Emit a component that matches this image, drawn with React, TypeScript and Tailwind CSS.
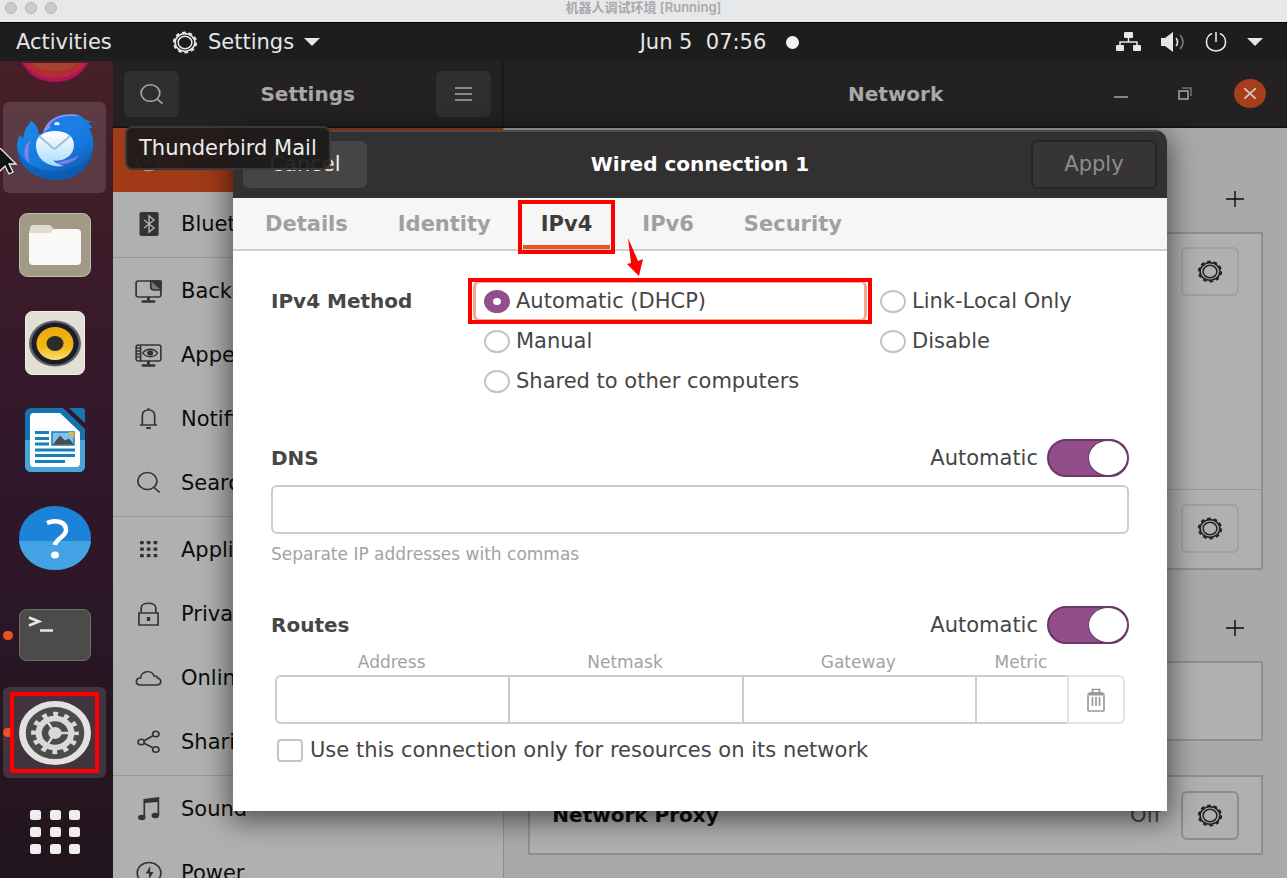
import type { ReactNode } from "react";

const GearIcon = () => (
    <svg viewBox="0 0 26 23" className="h-[23px] w-[26px]" fill="none" stroke="currentColor">
        <ellipse cx="13" cy="11.500" rx="11.200" ry="10" strokeWidth="1.900" strokeDasharray="3.700 2.970" />
        <ellipse cx="13" cy="11.500" rx="9.900" ry="8.800" strokeWidth="1.700" />
        <ellipse cx="13" cy="11.500" rx="6.900" ry="6.200" strokeWidth="1.500" />
    </svg>
);

const SearchIcon = () => (
    <svg viewBox="0 0 24 24" preserveAspectRatio="none" className="h-[22px] w-[25px]" fill="none" stroke="currentColor" strokeWidth="1.600">
        <circle cx="11" cy="11" r="9" />
        <path d="M17.500 17.500L22.500 22.500" />
    </svg>
);

const PlusIcon = () => (
    <svg viewBox="0 0 18 18" className="size-[18px]" stroke="currentColor" strokeWidth="1.400">
        <path d="M9 1v16M0 9h18" />
    </svg>
);

const Arrow = () => (
    <svg viewBox="0 0 16 8" className="h-2 w-4" fill="currentColor">
        <path d="M0 0h16L8 8z" />
    </svg>
);

/* ---------- dock ---------- */

const ThunderbirdIcon = () => (
    <svg viewBox="0 0 78 67" className="h-[67px] w-[78px]">
        <defs>
            <linearGradient id="tb" x1="0" y1="0" x2=".6" y2="1">
                <stop offset="0" stopColor="#1d8cec" />
                <stop offset=".7" stopColor="#1678de" />
                <stop offset="1" stopColor="#0f5cb4" />
            </linearGradient>
            <linearGradient id="env" x1="0" y1="0" x2="0" y2="1">
                <stop offset="0" stopColor="#fff" />
                <stop offset="1" stopColor="#a9dbfb" />
            </linearGradient>
        </defs>
        <path d="M27 19C30 7 40 0 54 0c8 0 12 2 14 5l8 3-4 1 5 5h-4c4 7 5 14 4 21-2 19-18 32-38 31C16 65 0 50 1 32c0-4 1-8 3-11l3 4c1-8 4-14 8.500-18C21 11 22 15 23 20z" fill="url(#tb)" />
        <path d="M1 32c3 15 16 24 36 25 19 1 34-8 40-22-2 19-18 32-38 31C16 65 0 50 1 32z" fill="#0e58ac" opacity=".7" />
        <path d="M27 19C30 7 40 .5 54 .5c4 0 8 0 10 2-12-1-22 2-28 9-2 3-5 4-9 7.500z" fill="#9b8bf0" />
        <path d="M33 12C38 4 46 2 56 2c8 0 13 4 16 9L50 30z" fill="#1a7fe4" />
        <path d="M15 26c-8 5-9 17-2 23-1-11-1-18 2-23z" fill="#8583ea" />
        <path d="M37 50c9 2 22-1 26-9-4 3-12 5-17 6z" fill="#7f79e8" />
        <path d="M20 31c0-9 8-14 19-14s19 5 19 14c0 7-5 13-12 15-4 1-8 1-9 0 2 3 6 5 11 6-15 2-28-6-28-21z" fill="url(#env)" />
        <path d="M23 22l14 12c1 1 2 1 3 0l14-12" fill="none" stroke="#9dbcd4" strokeWidth="1.800" />
        <ellipse cx="41" cy="9.700" rx="2.800" ry="1.600" fill="#e8f4ff" />
    </svg>
);

const FilesIcon = () => (
    <svg viewBox="0 0 72 64" className="h-16 w-[72px]">
        <rect x=".5" y=".5" width="71" height="63" rx="8" fill="#a09a86" stroke="#c1bcab" />
        <path d="M11 16c0-3 1-4 4-4h15c3 0 3 4 6 4v8H11z" fill="#dfdbcd" />
        <rect x="10" y="16" width="52" height="36" rx="4" fill="#faf9f8" />
        <path d="M10 20h20c3 0 3-4 6-4H14c-3 0-4 2-4 4z" fill="#dfdbcd" />
    </svg>
);

const RhythmboxIcon = () => (
    <svg viewBox="0 0 60 64" className="h-16 w-[60px]">
        <defs>
            <linearGradient id="cone" x1="0" y1="0" x2="0" y2="1">
                <stop offset="0" stopColor="#e9a90c" />
                <stop offset=".6" stopColor="#efb915" />
                <stop offset="1" stopColor="#fbe172" />
            </linearGradient>
        </defs>
        <rect x=".5" y=".5" width="59" height="63" rx="7" fill="#e3dfd4" stroke="#f2efe8" />
        <ellipse cx="30" cy="32.500" rx="26" ry="23" fill="#5f6266" />
        <ellipse cx="30" cy="32.500" rx="23.500" ry="21" fill="#1c1d28" />
        <ellipse cx="30" cy="32.500" rx="18.500" ry="16.500" fill="url(#cone)" />
        <ellipse cx="30" cy="32.500" rx="8.500" ry="7.500" fill="#2b2b2b" />
    </svg>
);

const WriterIcon = () => (
    <svg viewBox="0 0 60 64" className="h-16 w-[60px]">
        <path d="M7 0h31l22 21v37c0 4-3 6-6 6H7c-4 0-7-2-7-6V6c0-4 3-6 7-6z" fill="#1273ae" />
        <path d="M0 32h60v26c0 4-3 6-6 6H7c-4 0-7-2-7-6z" fill="#48a5d9" />
        <path d="M44 0h13c2 0 3 1 3 3v12z" fill="#1677b2" />
        <path d="M9 5h26l20 19v31c0 3-2 4-4 4H9c-3 0-4-1-4-4V9c0-3 1-4 4-4z" fill="#fdfdfd" />
        <path d="M10 24.500h14M10 30.500h14M10 36h14M10 42h40M10 47.500h40M10 53.500h30" stroke="#1b7fbd" strokeWidth="2.800" />
        <rect x="27" y="24" width="22" height="13" fill="#7cc3ee" stroke="#1b7fbd" strokeWidth="1.500" />
        <path d="M43 24h6v6z" fill="#e9b91c" />
        <path d="M28 36.500l7-9 5 5 4-2 5 6z" fill="#4c4c4c" />
    </svg>
);

const HelpIcon = () => (
    <svg viewBox="0 0 72 64" className="h-16 w-[72px]">
        <ellipse cx="36" cy="32" rx="36" ry="32" fill="#1c83d8" />
        <path d="M0 35h72C70 52 55 64 36 64S2 52 0 35z" fill="#43a3e4" />
        <path d="M28 17c9-4 19-1 19 7 0 7-10 8-11 15" fill="none" stroke="#fff" strokeWidth="4.500" />
        <ellipse cx="36" cy="49" rx="4" ry="3.600" fill="#fff" />
    </svg>
);

const TerminalIcon = () => (
    <svg viewBox="0 0 72 52" className="h-[52px] w-[72px]">
        <rect x=".5" y=".5" width="71" height="51" rx="7" fill="#4b4b4a" stroke="#6f6d6c" />
        <path d="M10 8.500l10 4-10 4M21 21.500h13" fill="none" stroke="#e8e8e8" strokeWidth="2.600" />
    </svg>
);

const SettingsIcon = () => (
    <svg viewBox="0 0 64 64" preserveAspectRatio="none" className="h-16 w-[72px]" fill="none">
        <circle cx="32" cy="32" r="29" fill="#4b4b4a" stroke="#e2e2e2" strokeWidth="6" />
        <circle cx="32" cy="32" r="19" stroke="#d9d9d9" strokeWidth="4.400" strokeDasharray="4.400 5.550" strokeDashoffset="2.200" />
        <circle cx="32" cy="32" r="14.500" stroke="#d9d9d9" strokeWidth="5.500" />
        <circle cx="32" cy="32" r="6" fill="#d9d9d9" />
        <path d="M32 32h13M32 32l-7-12M32 32l-7 12" stroke="#d9d9d9" strokeWidth="2.400" />
    </svg>
);

const AppsIcon = () => (
    <svg viewBox="0 0 50 44" className="h-11 w-[50px]" fill="#efeeec">
        {[0, 20, 39].map((x) => [0, 17, 34].map((y) => <rect key={`${x}-${y}`} x={x} y={y} width="11" height="10" rx="2.500" />))}
    </svg>
);

interface DockItem {
    label: string;
    icon: ReactNode;
    active?: boolean;
    running?: boolean;
    marked?: boolean;
}

const dockItems: DockItem[] = [
    { label: "Thunderbird Mail", icon: <ThunderbirdIcon />, active: true },
    { label: "Files", icon: <FilesIcon /> },
    { label: "Rhythmbox", icon: <RhythmboxIcon /> },
    { label: "LibreOffice Writer", icon: <WriterIcon /> },
    { label: "Help", icon: <HelpIcon /> },
    { label: "Terminal", icon: <TerminalIcon />, running: true },
    { label: "Settings", icon: <SettingsIcon />, active: true, running: true, marked: true },
];

const Dock = () => (
    <nav className="relative flex w-[113px] shrink-0 flex-col items-center overflow-hidden bg-linear-to-b from-[#471f27] via-[#30172b] via-50% to-[#22151d] pr-1">
        <div className="flex h-[41px] shrink-0 items-start">
            {/* bottom edge of the Firefox icon, scrolled out of the dock */}
            <svg viewBox="0 0 66 22" className="h-[22px] w-[66px]">
                <path d="M0 2h66C59 15 47 21 33 21S7 15 0 2z" fill="#b3125a" />
                <path d="M2 2h62C56 12 46 17 33 17S10 12 2 2z" fill="#b22c33" />
                <path d="M10 2h46c-6 6-14 8-23 8S16 8 10 2z" fill="#a7432f" />
            </svg>
        </div>
        <div className="flex h-[676px] shrink-0 flex-col justify-between">
            {dockItems.map((item) => (
                <button
                    key={item.label}
                    aria-label={item.label}
                    className={`relative flex h-[91px] w-[103px] items-center justify-center rounded-md ${item.active ? "bg-white/13" : ""}`}
                >
                    {item.running && <span className="absolute left-0 h-[9px] w-[10px] rounded-full bg-[#e95420]" />}
                    {item.icon}
                    {item.marked && <span className="absolute inset-x-[7px] inset-y-[5px] border-4 border-[#fe0000]" />}
                </button>
            ))}
        </div>
        <button aria-label="Show Applications" className="mt-8 shrink-0">
            <AppsIcon />
        </button>
        <svg viewBox="0 0 18 30" className="absolute top-[87px] left-0 h-[30px] w-[18px]" fill="#111" stroke="#eee" strokeWidth="1.300">
            <path d="M-8 -8L16 16h-7l4 8-4 2-4-8-6 6z" />
        </svg>
    </nav>
);

/* ---------- sidebar ---------- */

const rowIcons: Record<string, ReactNode> = {
    Network: (
        <g fill="none" stroke="currentColor" strokeWidth="1.500">
            <circle cx="12" cy="12" r="10.500" />
            <path d="M12 7v8M9 12l3 3 3-3" />
        </g>
    ),
    Bluetooth: (
        <g>
            <rect x="4" y="0" width="17" height="24" rx="2" fill="currentColor" />
            <path d="M8 8l9 8-4.500 4V4L17 8l-9 8" fill="none" stroke="#b0b0b0" strokeWidth="1.300" />
        </g>
    ),
    Background: (
        <g fill="none" stroke="currentColor" strokeWidth="1.500">
            <rect x="1" y="2" width="22" height="16" rx="2" />
            <path d="M14 2v6c0 2 1 3 3 3h6V2z" fill="#777" />
            <path d="M14 2l9 9V2z" fill="currentColor" stroke="none" />
            <path d="M12 18v4M6 22.500h12" strokeWidth="2.500" />
        </g>
    ),
    Appearance: (
        <g fill="none" stroke="currentColor" strokeWidth="1.400">
            <rect x="1" y="2" width="22" height="16" rx="2" />
            <path d="M5 2v16M1 5h4M1 8h4M1 11h4M1 14h4M7 10c3-5 10-5 13 0-3 5-10 5-13 0z" />
            <circle cx="13.500" cy="10" r="2" fill="currentColor" />
            <path d="M12 18v4M6 22.500h12" strokeWidth="2.500" />
        </g>
    ),
    Notifications: (
        <g fill="none" stroke="currentColor" strokeWidth="1.500">
            <path d="M4.500 18h15M6.500 18V9c0-4 2-6 5.500-6s5.500 2 5.500 6v9M12 1v2" />
            <path d="M10 21h4" strokeWidth="2" />
        </g>
    ),
    Search: (
        <g fill="none" stroke="currentColor" strokeWidth="1.500">
            <circle cx="11" cy="10" r="8.500" />
            <path d="M17 16.500l5 5" />
        </g>
    ),
    Applications: (
        <g fill="currentColor">
            {[4.5, 10.5, 16.5].map((x) => [3, 9.5, 16].map((y) => <rect key={`${x}-${y}`} x={x} y={y} width="3.300" height="3.300" rx=".5" />))}
        </g>
    ),
    Privacy: (
        <g fill="none" stroke="currentColor" strokeWidth="1.500">
            <rect x="3.500" y="11" width="17" height="12" />
            <path d="M5.500 11V6c0-6.500 13-6.500 13 0v5" />
            <rect x="10.500" y="15" width="3" height="4" fill="currentColor" stroke="none" />
        </g>
    ),
    "Online Accounts": (
        <path d="M5 19c-5 0-5-7 0-7 0-7 10-9 12-2 2 0 3 1 3 2 4 1 4 7-1 7z" fill="none" stroke="currentColor" strokeWidth="1.500" />
    ),
    Sharing: (
        <g fill="none" stroke="currentColor" strokeWidth="1.500">
            <circle cx="5.500" cy="12" r="2.800" />
            <circle cx="18.500" cy="4" r="2.800" />
            <circle cx="18.500" cy="19.500" r="2.800" />
            <path d="M8.500 10.500l7-4.500M8.500 13.500l7 4" />
        </g>
    ),
    Sound: (
        <g fill="currentColor">
            <path d="M7.500 2l14-2v19H20V5L9 6v14H7.500z" />
            <ellipse cx="6" cy="20.500" rx="3.300" ry="2.800" />
            <ellipse cx="18" cy="18.500" rx="3.300" ry="2.800" />
        </g>
    ),
    Power: (
        <g fill="none" stroke="currentColor" strokeWidth="1.500">
            <circle cx="12.500" cy="12" r="10.500" />
            <path d="M13.500 5l-4 7.500h3v6l4-7.500h-3z" fill="currentColor" stroke="none" />
        </g>
    ),
};

const sidebarGroups = [
    ["Network", "Bluetooth"],
    ["Background", "Appearance", "Notifications", "Search"],
    ["Applications", "Privacy", "Online Accounts", "Sharing"],
    ["Sound", "Power"],
];

const Sidebar = () => (
    <aside className="flex w-1/3 shrink-0 flex-col overflow-hidden border-r border-[#8f8f8f] bg-[#b0b0b0] text-[#0c0c0c]">
        {sidebarGroups.map((group, i) => (
            <ul key={group[0]} className={`shrink-0 border-b border-[#989898] pb-px ${i > 0 ? "pt-px" : ""}`}>
                {group.map((name) => (
                    <li key={name} className={`h-16 ${name === "Network" ? "bg-[#a03a17] text-[#5b2814]" : ""}`}>
                        <a href="#" className="flex h-full items-center gap-[19px] pl-[22px]">
                            <svg viewBox="0 0 24 24" preserveAspectRatio="none" className={`h-6 w-[27px] shrink-0 ${name === "Network" ? "text-[#b89c90]" : "text-[#333]"}`}>
                                {rowIcons[name]}
                            </svg>
                            {name}
                        </a>
                    </li>
                ))}
            </ul>
        ))}
    </aside>
);

/* ---------- network panel ---------- */

const Options = ({ strong = false }: { strong?: boolean }) => (
    <button aria-label="Options" className={`flex h-[49px] w-[58px] items-center justify-center rounded-md border-2 text-[#222] ${strong ? "border-[#8c8c8c]" : "border-[#a0a0a0]"}`}>
        <GearIcon />
    </button>
);

const cardClass = "border-2 border-[#8f8f8f] bg-[#b0b0b0]";

const NetworkPanel = () => (
    <main className="flex-1 overflow-hidden bg-[#a9a9a9] px-6 text-[#0c0c0c]">
        <div className="flex h-[104px] items-end justify-end px-[19px] pb-6">
            <button aria-label="Add connection"><PlusIcon /></button>
        </div>
        <section className={`${cardClass} h-[338px]`}>
            <div className="flex h-64 items-start justify-end border-b border-[#989898] px-[22px] pt-[13px]">
                <Options />
            </div>
            <div className="flex justify-end px-[22px] pt-[14px]">
                <Options />
            </div>
        </section>
        <div className="flex h-[91px] items-end justify-end px-[19px] pb-6">
            <button aria-label="Add VPN"><PlusIcon /></button>
        </div>
        <section className={`${cardClass} h-20`} />
        <section className={`${cardClass} mt-[34px] flex h-20 items-center px-[22px]`}>
            <h2 className="flex-1 text-xl font-bold">Network Proxy</h2>
            <span className="mr-5 text-[#444]">Off</span>
            <Options strong />
        </section>
    </main>
);

/* ---------- dialog ---------- */

const tabs = ["Details", "Identity", "IPv4", "IPv6", "Security"];

const Radio = ({ id, label, checked = false }: { id: string; label: string; checked?: boolean }) => (
    <label htmlFor={id} className={`relative flex h-10 items-center gap-[6px] pl-[10px] ${checked ? "rounded-md outline-3 -outline-offset-2 outline-[#f5a78f]" : ""}`}>
        <input
            id={id}
            type="radio"
            name="method"
            defaultChecked={checked}
            className="h-[23px] w-[26px] appearance-none rounded-[50%] border-2 border-[#c4c4c4] bg-white checked:border-x-9 checked:border-y-8 checked:border-[#924d8b]"
        />
        {label}
        {checked && <span className="absolute -inset-x-[6px] -inset-y-[3px] border-4 border-[#fe0000]" />}
    </label>
);

const SectionHead = ({ title, id }: { title: string; id: string }) => (
    <div className="flex h-[38px] items-center">
        <h3 className="flex-1 text-xl font-bold">{title}</h3>
        <label htmlFor={id} className="mr-[9px]">Automatic</label>
        <span className="relative h-[38px] w-[82px]">
            <input id={id} type="checkbox" role="switch" defaultChecked className="block size-full appearance-none rounded-full border-2 border-[#6b3766] bg-[#924d8b]" />
            <span className="pointer-events-none absolute top-px right-px h-9 w-10 rounded-[50%] border border-[#6b3766] bg-white" />
        </span>
    </div>
);

const columns = ["Address", "Netmask", "Gateway", "Metric"];

const Dialog = () => (
    <div role="dialog" aria-labelledby="dialog-title" className="flex w-[80%] max-w-[934px] flex-col overflow-hidden rounded-t-xl bg-white text-[#464646] shadow-[0_6px_28px_3px_rgba(0,0,0,0.55)]">
        <header className="grid h-[68px] shrink-0 grid-cols-[1fr_auto_1fr] items-center border-t-2 border-[#4b4949] bg-[#333031] px-[10px] pb-[2px]">
            <button className="h-[47px] w-[124px] justify-self-start rounded-md bg-[#474543] text-[#eee]">Cancel</button>
            <h2 id="dialog-title" className="text-xl font-bold text-white">Wired connection 1</h2>
            <button disabled className="h-[49px] w-[126px] justify-self-end rounded-md border-2 border-[#272526] bg-[#373435] text-[#8f8d8c]">Apply</button>
        </header>
        <div role="tablist" className="flex h-[53px] shrink-0 gap-[14px] border-b-2 border-[#cecece] bg-[#f6f6f6] px-[14px] font-bold text-[#a0a0a0]">
            {tabs.map((tab) => (
                <button
                    key={tab}
                    role="tab"
                    aria-selected={tab === "IPv4"}
                    className={`relative px-[18px] ${tab === "IPv4" ? "border-b-4 border-[#e95420] pt-1 text-[#3d3d3d]" : ""}`}
                >
                    {tab}
                    {tab === "IPv4" && (
                        <>
                            <span className="absolute -inset-x-[5px] top-[2px] -bottom-[9px] z-10 border-4 border-[#fe0000]" />
                            <svg viewBox="0 0 18 38" className="absolute top-10 -right-[34px] z-10 h-[38px] w-[18px]" fill="#fe0000">
                                <path d="M2 0l10 23 5-2-4 17L1 26l4-1z" />
                            </svg>
                        </>
                    )}
                </button>
            ))}
        </div>
        <div className="px-[38px] pt-[30px] pb-[45px]">
            <div role="radiogroup" aria-labelledby="method-title" className="flex">
                <h3 id="method-title" className="w-[203px] shrink-0 pt-1 text-xl leading-8 font-bold">IPv4 Method</h3>
                <div className="grid flex-1 grid-cols-[392px_1fr] gap-x-1">
                    <Radio id="auto" label="Automatic (DHCP)" checked />
                    <Radio id="link" label="Link-Local Only" />
                    <Radio id="manual" label="Manual" />
                    <Radio id="disable" label="Disable" />
                    <Radio id="shared" label="Shared to other computers" />
                </div>
            </div>
            <section className="mt-[38px]">
                <SectionHead title="DNS" id="dns-auto" />
                <input aria-label="DNS servers" className="mt-2 block h-[49px] w-full rounded-md border-2 border-[#cdcdcd] px-3" />
                <p className="mt-2 text-[17px] leading-6 text-[#a2a2a2]">Separate IP addresses with commas</p>
            </section>
            <section className="mt-10">
                <SectionHead title="Routes" id="routes-auto" />
                <div className="px-1">
                    <table className="w-full table-fixed border-separate border-spacing-0">
                        <colgroup>
                            <col />
                            <col />
                            <col />
                            <col className="w-[92px]" />
                            <col className="w-[58px]" />
                        </colgroup>
                        <thead>
                            <tr className="h-[31px] text-[17px] leading-6 text-[#a2a2a2]">
                                {columns.map((name) => <th key={name} className="pt-1 font-normal">{name}</th>)}
                                <td />
                            </tr>
                        </thead>
                        <tbody>
                            <tr className="h-[49px]">
                                {columns.map((name) => (
                                    <td key={name} className="border-y-2 border-l-2 border-[#cdcdcd] p-0 first:rounded-l-md">
                                        <input aria-label={name} className="block h-[45px] w-full px-2" />
                                    </td>
                                ))}
                                <td className="rounded-r-md border-2 border-[#e2e2e2] p-0">
                                    <button aria-label="Delete route" className="flex h-10 w-full items-center justify-center text-[#9a9a9a]">
                                        <svg viewBox="0 0 20 24" className="h-6 w-5" fill="none" stroke="currentColor" strokeWidth="1.700">
                                            <path d="M2 8v14c0 1 1 1 1.500 1h13c1 0 1.500 0 1.500-1V8M6.500 9v9M10 9v9M13.500 9v9M6.500 4V1.500h7V4" />
                                            <path d="M1 7.500C1 4 5 4 6 4h8c1 0 5 0 5 3.500z" fill="currentColor" stroke="none" />
                                        </svg>
                                    </button>
                                </td>
                            </tr>
                        </tbody>
                    </table>
                </div>
                <label htmlFor="only" className="mt-[10px] flex h-8 items-center gap-[7px] pl-[6px]">
                    <input id="only" type="checkbox" className="h-[23px] w-[26px] appearance-none rounded-sm border-2 border-[#c4c4c4] bg-white" />
                    Use this connection only for resources on its network
                </label>
            </section>
        </div>
    </div>
);

/* ---------- desktop ---------- */

const TopPanel = () => (
    <div className="flex h-[38px] shrink-0 items-center bg-[#1d1d1d] text-[#e6e6e6]">
        <div className="flex w-[49.7%] items-center">
            <button className="w-[172px] pl-4 text-left">Activities</button>
            <button className="flex items-center gap-[10px]">
                <GearIcon />
                Settings
                <Arrow />
            </button>
        </div>
        <button className="flex items-center gap-5 whitespace-pre">
            Jun 5  07:56
            <span className="size-[13px] rounded-full bg-[#f2f2f2]" />
        </button>
        <button aria-label="System menu" className="mr-6 ml-auto flex items-center gap-5">
            <svg viewBox="0 0 25 20" className="h-5 w-[25px]" fill="currentColor">
                <rect x="8" y="0" width="9" height="6" rx="1" />
                <rect x="0" y="13" width="8" height="6" rx="1" />
                <rect x="17" y="13" width="8" height="6" rx="1" />
                <path d="M12.500 5v5M4 13v-3h17v3" fill="none" stroke="currentColor" strokeWidth="1.500" />
            </svg>
            <svg viewBox="0 0 24 20" className="h-5 w-6" fill="none" stroke="currentColor" strokeWidth="1.600">
                <path d="M0 6h4l8-6v20l-8-6H0z" fill="currentColor" stroke="none" />
                <path d="M15 6c2 2 2 6 0 8" />
                <path d="M19 3c4 4 4 10 0 14" opacity=".45" />
            </svg>
            <svg viewBox="0 0 22 20" className="h-5 w-[22px]" fill="none" stroke="currentColor" strokeWidth="1.600">
                <path d="M7 1.500C-1 5-1 18 11 19 23 18 23 5 15 1.500M11 0v10" />
            </svg>
            <Arrow />
        </button>
    </div>
);

const HeaderBar = () => (
    <header className="flex h-[67px] shrink-0 border-b-2 border-[#151414] bg-[#232122] text-xl font-bold text-[#a9a8a7]">
        <div className="flex w-1/3 shrink-0 items-center justify-between border-r-2 border-[#1b1a1a] px-[11px]">
            <button aria-label="Search" className="flex h-[46px] w-[55px] items-center justify-center rounded-md bg-[#302e2f]"><SearchIcon /></button>
            <h1>Settings</h1>
            <button aria-label="Menu" className="flex h-[46px] w-[55px] items-center justify-center rounded-md bg-[#302e2f]">
                <svg viewBox="0 0 17 14" className="h-[14px] w-[17px]" stroke="currentColor" strokeWidth="1.500">
                    <path d="M0 1h17M0 7h17M0 13h17" />
                </svg>
            </button>
        </div>
        <div className="grid flex-1 grid-cols-[1fr_auto_1fr] items-center">
            <span />
            <h1>Network</h1>
            <div className="flex items-center justify-end gap-[42px] pr-[21px]">
                <button aria-label="Minimize" className="pr-2">
                    <svg viewBox="0 0 14 14" className="size-[14px]" stroke="currentColor" strokeWidth="1.500"><path d="M0 10h14" /></svg>
                </button>
                <button aria-label="Restore">
                    <svg viewBox="0 0 14 13" className="h-[13px] w-[14px]" fill="none" stroke="currentColor" strokeWidth="1.500">
                        <rect x="1" y="4" width="9" height="8" />
                        <path d="M4 1h9v8" opacity=".6" />
                    </svg>
                </button>
                <button aria-label="Close" className="flex h-[29px] w-8 items-center justify-center rounded-[50%] bg-[#a63e1a] text-[#d6c5be]">
                    <svg viewBox="0 0 12 11" className="h-[11px] w-3" stroke="currentColor" strokeWidth="1.700"><path d="M0 0l12 11M12 0L0 11" /></svg>
                </button>
            </div>
        </div>
    </header>
);

export default function App() {
    return (
        <div className="flex h-screen flex-col overflow-hidden bg-black font-['DejaVu_Sans','Noto_Sans_CJK_SC',sans-serif] text-[21px] leading-7">
            <div className="relative mb-px flex h-[22px] shrink-0 items-center justify-center bg-[#e7e8ea]">
                <div className="absolute left-[5px] flex gap-2 pb-[6px]">
                    {["close", "minimize", "zoom"].map((name) => (
                        <button key={name} aria-label={name} className="size-3 rounded-full border border-[#b4b4b4] bg-[#cbcbcb]" />
                    ))}
                </div>
                <span className="pb-2 font-['Inter','Noto_Sans_CJK_SC',sans-serif] text-[13px] leading-4 font-semibold text-[#a8a9aa]">机器人调试环境 [Running]</span>
            </div>
            <TopPanel />
            <div className="flex min-h-0 flex-1">
                <Dock />
                <div className="relative flex min-w-0 flex-1 flex-col">
                    <HeaderBar />
                    <div className="flex min-h-0 flex-1">
                        <Sidebar />
                        <NetworkPanel />
                    </div>
                    <div className="absolute inset-x-0 top-[69px] flex justify-center">
                        <Dialog />
                    </div>
                    <div role="tooltip" className="absolute top-[65px] left-3 rounded-lg border-2 border-[#3a3838] bg-[#1c1a1a]/93 px-3 py-[6px] text-[#ececec]">
                        Thunderbird Mail
                    </div>
                </div>
            </div>
        </div>
    );
}
